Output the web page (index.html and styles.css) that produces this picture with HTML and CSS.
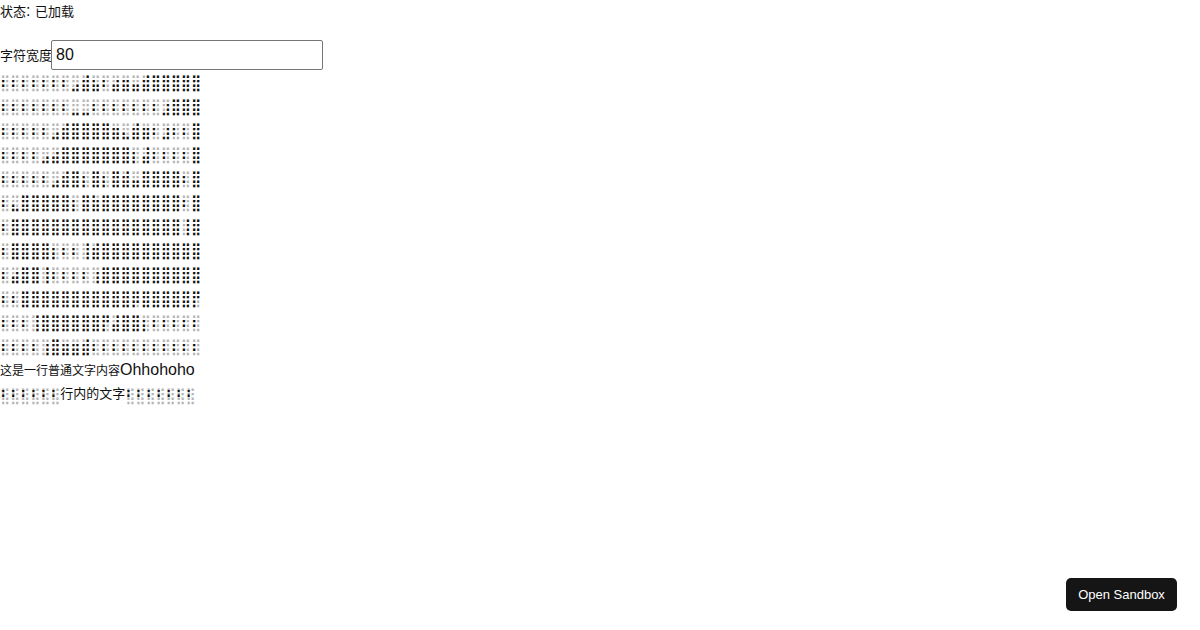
FILE: index.html
```html
<!DOCTYPE html>
<html lang="zh">
<head>
<meta charset="utf-8">
<title>Braille</title>
<link rel="stylesheet" href="styles.css">
</head>
<body>
<div class="page">
  <div class="status"><span class="cjk">状态</span>: <span class="cjk">已加载</span></div>
  <div class="field"><label class="field-label cjk">字符宽度</label><input class="field-input" type="text" value="80"></div>
  <pre class="art">⠆⠆⠆⠆⠆⠆⠆⣠⣾⣦⠆⣴⣶⣤⣾⣿⣿⣿⣿⣿
⠆⠆⠆⠆⠆⠆⠆⣀⣀⠆⠆⠆⠆⠆⠆⠆⣰⣿⣿⣿
⠆⠆⠆⠆⠆⣠⣾⣿⣿⣿⣿⣶⣄⣾⣶⠆⣰⠆⠆⣿
⠆⠆⠆⠆⣠⣴⣿⣿⣿⣿⣿⣿⣿⡆⣼⠆⠆⠆⠆⣿
⠆⠆⠆⠆⠆⣠⣾⣿⡆⣿⡆⣿⣾⣤⣿⣿⣿⣿⠆⣿
⠆⣄⣿⣿⣿⣿⣿⡆⣿⣷⣿⣿⣿⣿⣿⣿⣿⣿⠆⣿
⠆⣿⣿⣿⣿⣿⣿⣿⣿⣿⣿⣿⣿⣿⣿⣿⣿⣿⢸⣿
⠆⣿⣿⣿⣿⡆⠆⠆⢸⣾⣿⣿⣿⣿⣿⣿⣿⣿⣿⣿
⠆⣴⣿⣿⢸⠆⠆⠆⠆⢰⣿⣿⣿⣿⣿⣿⣿⣿⣿⣿
⠆⠆⣿⣿⣿⣿⣿⣿⣿⣿⣿⣿⣿⡿⣿⣿⣿⣿⣿⡟
⠆⠆⠆⢸⣿⣿⣿⣿⣿⣿⡟⣼⣿⣿⡆⠆⠆⠆⠆⠆
⠆⠆⠆⠆⢰⣿⣶⣶⣾⠆⠆⠆⠆⠆⠆⠆⠆⠆⠆⠆</pre>
  <div class="mixed"><span class="cjk cjk-small">这是一行普通文字内容</span>Ohhohoho</div>
  <div class="inline-row"><span class="braille braille-6">⠆⠆⠆⠆⠆⠆</span><span class="cjk cjk-inline">行内的文字</span><span class="braille braille-7">⠆⠆⠆⠆⠆⠆⠆</span></div>
</div>
<a class="sandbox-btn" href="#">Open Sandbox</a>
</body>
</html>
```

FILE: styles.css
```css
html, body {
  margin: 0;
  padding: 0;
  background: #ffffff;
}

body {
  font-family: "Liberation Sans", "Noto Sans CJK SC", sans-serif;
  font-size: 16px;
  color: #111111;
}

.page {
  display: flex;
  flex-direction: column;
  align-items: flex-start;
  position: relative;
  z-index: 0;
}

.cjk {
  font-family: "Noto Sans CJK SC", sans-serif;
  font-size: 13px;
}

.cjk-small {
  font-size: 12px;
}

.cjk-inline {
  font-size: 13px;
}

.status {
  line-height: 22px;
  margin-bottom: 18px;
}

.field {
  display: flex;
  align-items: center;
  height: 30px;
}

.field-label {
  line-height: 22px;
  width: 51px;
  white-space: nowrap;
}

.field-input {
  box-sizing: border-box;
  width: 272px;
  height: 30px;
  margin: 0;
  padding: 0 4px;
  border: 1px solid #767676;
  border-radius: 2px;
  font-family: "Liberation Sans", sans-serif;
  font-size: 16px;
  color: #111111;
  background: #ffffff;
}

.art,
.braille {
  font-family: "DejaVu Sans Condensed", "DejaVu Sans", sans-serif;
  font-size: 16px;
  letter-spacing: -0.5px;
  color: #111111;
  position: relative;
}

.art {
  margin: 1px 0 0 0;
  line-height: 24px;
}

/* unraised braille dots, drawn faintly under the raised ones */
.art::before,
.braille::before {
  position: absolute;
  left: 0;
  top: 0;
  z-index: -1;
  color: #b4b4b4;
  white-space: pre;
}

.art::before {
  content: "⣿⣿⣿⣿⣿⣿⣿⣿⣿⣿⣿⣿⣿⣿⣿⣿⣿⣿⣿⣿\A⣿⣿⣿⣿⣿⣿⣿⣿⣿⣿⣿⣿⣿⣿⣿⣿⣿⣿⣿⣿\A⣿⣿⣿⣿⣿⣿⣿⣿⣿⣿⣿⣿⣿⣿⣿⣿⣿⣿⣿⣿\A⣿⣿⣿⣿⣿⣿⣿⣿⣿⣿⣿⣿⣿⣿⣿⣿⣿⣿⣿⣿\A⣿⣿⣿⣿⣿⣿⣿⣿⣿⣿⣿⣿⣿⣿⣿⣿⣿⣿⣿⣿\A⣿⣿⣿⣿⣿⣿⣿⣿⣿⣿⣿⣿⣿⣿⣿⣿⣿⣿⣿⣿\A⣿⣿⣿⣿⣿⣿⣿⣿⣿⣿⣿⣿⣿⣿⣿⣿⣿⣿⣿⣿\A⣿⣿⣿⣿⣿⣿⣿⣿⣿⣿⣿⣿⣿⣿⣿⣿⣿⣿⣿⣿\A⣿⣿⣿⣿⣿⣿⣿⣿⣿⣿⣿⣿⣿⣿⣿⣿⣿⣿⣿⣿\A⣿⣿⣿⣿⣿⣿⣿⣿⣿⣿⣿⣿⣿⣿⣿⣿⣿⣿⣿⣿\A⣿⣿⣿⣿⣿⣿⣿⣿⣿⣿⣿⣿⣿⣿⣿⣿⣿⣿⣿⣿\A⣿⣿⣿⣿⣿⣿⣿⣿⣿⣿⣿⣿⣿⣿⣿⣿⣿⣿⣿⣿";
}

.braille-6::before {
  content: "⣿⣿⣿⣿⣿⣿";
}

.braille-7::before {
  content: "⣿⣿⣿⣿⣿⣿⣿";
}

.mixed {
  line-height: 21px;
}

.inline-row {
  line-height: 26px;
  position: relative;
  z-index: 0;
}

.sandbox-btn {
  position: fixed;
  right: 23px;
  bottom: 19px;
  width: 111px;
  height: 33px;
  box-sizing: border-box;
  display: flex;
  align-items: center;
  justify-content: center;
  background: #151515;
  color: #ffffff;
  border-radius: 5px;
  font-family: "Liberation Sans", sans-serif;
  font-size: 13px;
  text-decoration: none;
}
```
